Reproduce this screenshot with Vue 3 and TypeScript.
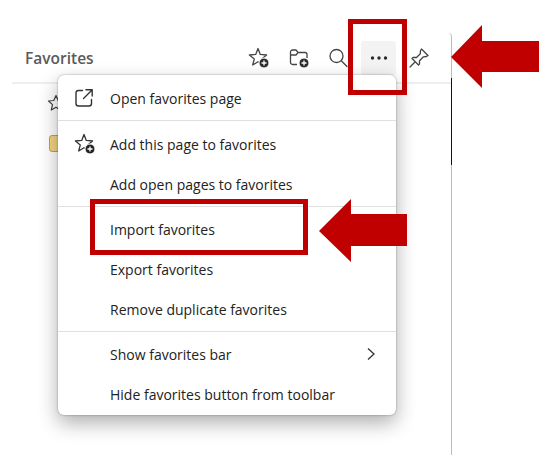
<script setup lang="ts">
interface Row { label: string; icon?: 'open' | 'star'; chevron?: boolean }
const groups: Row[][] = [
  [{ label: 'Open favorites page', icon: 'open' }],
  [{ label: 'Add this page to favorites', icon: 'star' }, { label: 'Add open pages to favorites' }],
  [{ label: 'Import favorites' }, { label: 'Export favorites' }, { label: 'Remove duplicate favorites' }],
  [{ label: 'Show favorites bar', chevron: true }, { label: 'Hide favorites button from toolbar' }],
]
</script>

<template>
  <div class="stage">
    <section class="panel">
      <header class="head">
        <h1 class="title">Favorites</h1>
        <div class="tools">
          <button class="tool">
            <svg width="22" height="22" viewBox="0 0 22 22" fill="none">
              <path d="M10 1.500 12.300 7.400 18.600 8 13.700 11.900 15.300 18 10 14.700 4.700 18 6.300 11.900 1.400 8 7.700 7.400Z" stroke="#444" stroke-width="1.300" stroke-linejoin="round"/>
              <circle cx="16" cy="16" r="5" fill="#2b2b2b" stroke="#fff" stroke-width="1"/>
              <path d="M16 13.500v5M13.500 16h5" stroke="#fff" stroke-width="1.300"/>
            </svg>
          </button>
          <button class="tool">
            <svg width="22" height="22" viewBox="0 0 22 22" fill="none">
              <path d="M9 17.500H4.500A2 2 0 0 1 2.500 15.500V5A2 2 0 0 1 4.500 3H8L10 5.500H17A2 2 0 0 1 19 7.500V11M2.500 8H8L10 5.500" stroke="#444" stroke-width="1.300" stroke-linejoin="round"/>
              <circle cx="16" cy="16" r="5" fill="#2b2b2b" stroke="#fff" stroke-width="1"/>
              <path d="M16 13.500v5M13.500 16h5" stroke="#fff" stroke-width="1.300"/>
            </svg>
          </button>
          <button class="tool">
            <svg width="20" height="20" viewBox="0 0 20 20" fill="none">
              <circle cx="7.500" cy="8" r="6.500" stroke="#444" stroke-width="1.300"/>
              <path d="M12.300 12.800 18 18.500" stroke="#444" stroke-width="1.300" stroke-linecap="round"/>
            </svg>
          </button>
          <button class="tool active">
            <svg width="20" height="6" viewBox="0 0 20 6" fill="#2b2b2b">
              <circle cx="3.500" cy="3" r="1.700"/><circle cx="10" cy="3" r="1.700"/><circle cx="16.500" cy="3" r="1.700"/>
            </svg>
          </button>
          <button class="tool">
            <svg width="22" height="22" viewBox="0 0 22 22" fill="none">
              <path d="M13.500 2 20 8.500 18.500 9.500 15.500 9.800 11.500 13.800 11.500 17 10.500 18 4 11.500 5 10.500 8.500 10.500 12.300 6.700 12.500 3.500ZM7 15 2 20" stroke="#444" stroke-width="1.300" stroke-linejoin="round" stroke-linecap="round"/>
            </svg>
          </button>
        </div>
      </header>
      <ul class="list">
        <li class="list-item">
          <svg width="18" height="18" viewBox="0 0 18 18" fill="none">
            <path d="M9 1.500 11.200 6.500 16.500 7 12.500 10.600 13.700 16 9 13.200 4.300 16 5.500 10.600 1.500 7 6.800 6.500Z" stroke="#444" stroke-width="1.200" stroke-linejoin="round"/>
          </svg>
        </li>
        <li class="list-item">
          <span class="folder"></span>
        </li>
      </ul>
    </section>

    <div class="line-dark"></div>

    <nav class="menu">
      <div v-for="(group, g) in groups" :key="g" class="group">
        <div v-for="row in group" :key="row.label" class="row">
          <span class="row-icon">
            <svg v-if="row.icon === 'open'" width="20" height="20" viewBox="0 0 20 20" fill="none">
              <path d="M8.500 2.500H4.500A2.500 2.500 0 0 0 2 5V15.500A2.500 2.500 0 0 0 4.500 18H15A2.500 2.500 0 0 0 17.500 15.500V11.500M12 1.800H18.200V8M18 2 9.500 10.500" stroke="#333" stroke-width="1.400" stroke-linecap="round" stroke-linejoin="round"/>
            </svg>
            <svg v-else-if="row.icon === 'star'" width="22" height="22" viewBox="0 0 22 22" fill="none">
              <path d="M10 1.500 12.300 7.400 18.600 8 13.700 11.900 15.300 18 10 14.700 4.700 18 6.300 11.900 1.400 8 7.700 7.400Z" stroke="#333" stroke-width="1.300" stroke-linejoin="round"/>
              <circle cx="16" cy="16" r="5" fill="#222" stroke="#fff" stroke-width="1"/>
              <path d="M16 13.500v5M13.500 16h5" stroke="#fff" stroke-width="1.300"/>
            </svg>
          </span>
          <span class="label">{{ row.label }}</span>
          <svg v-if="row.chevron" class="chevron" width="10" height="14" viewBox="0 0 10 14" fill="none">
            <path d="M2 1.500 8 7 2 12.500" stroke="#333" stroke-width="1.300"/>
          </svg>
        </div>
      </div>
    </nav>

    <div class="box box-more"></div>
    <div class="box box-import"></div>
    <svg class="arrow arrow-top" width="88" height="63" viewBox="0 0 88 63"><path d="M0 32 31 0V16H88V47H31V63Z" fill="#c00000"/></svg>
    <svg class="arrow arrow-mid" width="88" height="63" viewBox="0 0 88 63"><path d="M0 32 32 0V15H88V47H32V63Z" fill="#c00000"/></svg>
  </div>
</template>

<style>
html, body { margin: 0; background: #fff; }
</style>

<style scoped>
.stage {
  position: relative;
  width: 546px;
  height: 465px;
  overflow: hidden;
  background: #fff;
  font-family: "Open Sans", "Noto Sans", sans-serif;
  color: #222;
  padding: 33px 0 10px 12px;
  box-sizing: border-box;
}
.panel {
  width: 440px;
  height: 422px;
  box-sizing: border-box;
  border-right: 1px solid #bdbdbd;
  border-top-right-radius: 4px;
}
.head {
  height: 51px;
  box-sizing: border-box;
  display: flex;
  align-items: center;
  justify-content: space-between;
  padding: 0 15px 0 13px;
  border-bottom: 2px solid #eeeeee;
}
.title {
  margin: 0;
  font-size: 15.500px;
  font-weight: 600;
  color: #5a5a5a;
}
.tools { display: flex; gap: 5px; margin-top: 1px; }
.tool {
  width: 35px;
  height: 34px;
  padding: 0;
  border: 0;
  border-radius: 3px;
  background: transparent;
  display: flex;
  align-items: center;
  justify-content: center;
}
.tool.active { background: #f3f3f3; }
.list { list-style: none; margin: -1px 0 0; padding: 0 0 0 35px; }
.list-item { height: 40px; display: flex; align-items: center; }
.folder {
  display: block;
  width: 14px;
  height: 17px;
  margin-left: 2px;
  border: 1px solid #c9a13b;
  border-radius: 3px;
  background: #f3d67e;
  box-sizing: border-box;
}
.line-dark {
  position: absolute;
  left: 451px;
  top: 78px;
  width: 1px;
  height: 87px;
  background: #111;
}
.menu {
  position: absolute;
  left: 58px;
  top: 75px;
  width: 338px;
  height: 340px;
  box-sizing: border-box;
  background: #fff;
  border-radius: 6px;
  box-shadow: 0 0 2px rgba(0, 0, 0, 0.4), 0 8px 20px rgba(0, 0, 0, 0.32);
  padding: 3px 0 1px;
}
.group + .group {
  border-top: 1px solid #e0e0e0;
  margin-top: 2px;
  padding-top: 2px;
}
.group:nth-child(2) { padding-top: 3px; }
.row {
  height: 40px;
  display: flex;
  align-items: center;
  padding: 0 20px 0 16px;
  font-size: 14px;
}
.row-icon {
  width: 36px;
  flex: none;
  display: flex;
  align-items: center;
}
.label { flex: 1; white-space: nowrap; }
.chevron { flex: none; }
.box {
  position: absolute;
  box-sizing: border-box;
  border: 5px solid #c00000;
}
.box-more { left: 348px; top: 19px; width: 59px; height: 76px; }
.box-import { left: 90px; top: 199px; width: 218px; height: 56px; }
.arrow { position: absolute; }
.arrow-top { left: 451px; top: 25px; }
.arrow-mid { left: 319px; top: 199px; }
</style>
